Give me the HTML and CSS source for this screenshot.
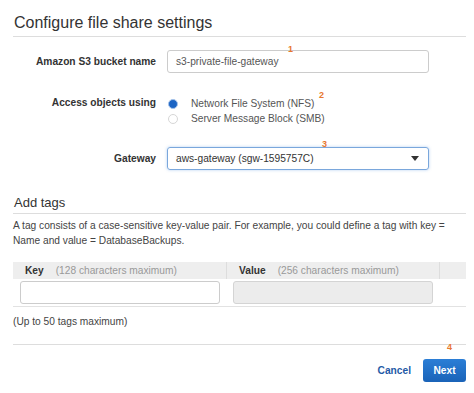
FILE: index.html
```html
<!DOCTYPE html>
<html lang="en">
<head>
    <meta charset="UTF-8">
    <title>Configure file share settings</title>
    <link rel="stylesheet" href="styles.css">
</head>
<body>

    <!-- File share settings -->
    <h1 class="page-title">Configure file share settings</h1>

    <div class="form-grid">
        <div class="form-label row-bucket">Amazon S3 bucket name</div>
        <div class="field">
            <div class="text-input">s3-private-file-gateway</div>
            <span class="marker marker-1">1</span>
        </div>

        <div class="form-label row-access">Access objects using</div>
        <div class="field radio-group">
            <div class="radio-item"><span class="radio checked"></span>Network File System (NFS)</div>
            <div class="radio-item"><span class="radio"></span>Server Message Block (SMB)</div>
            <span class="marker marker-2">2</span>
        </div>

        <div class="form-label row-gateway">Gateway</div>
        <div class="field field-gateway">
            <div class="select-input">
                <span>aws-gateway (sgw-1595757C)</span>
                <span class="caret"></span>
            </div>
            <span class="marker marker-3">3</span>
        </div>
    </div>

    <!-- Tags -->
    <h2 class="section-title">Add tags</h2>
    <p class="section-text">A tag consists of a case-sensitive key-value pair. For example, you could define a tag with key = Name and value = DatabaseBackups.</p>

    <div class="tag-table">
        <div class="tag-head">
            <div class="tag-col"><b>Key</b><span class="hint">(128 characters maximum)</span></div>
            <div class="tag-col"><b>Value</b><span class="hint">(256 characters maximum)</span></div>
            <div class="tag-col tag-spare"></div>
        </div>
        <div class="tag-row">
            <div class="tag-cell"><div class="tag-input"></div></div>
            <div class="tag-cell"><div class="tag-input disabled"></div></div>
        </div>
    </div>

    <p class="tag-limit">(Up to 50 tags maximum)</p>

    <!-- Actions -->
    <div class="actions">
        <a class="btn-cancel">Cancel</a>
        <a class="btn-next">Next</a>
        <span class="marker marker-4">4</span>
    </div>

</body>
</html>
```

FILE: styles.css
```css
/* General Reset */
* {
    margin: 0;
    padding: 0;
    box-sizing: border-box;
}

body {
    background: #fff;
    color: #444;
    font-family: 'Liberation Sans', Arial, sans-serif;
    font-size: 10.2px;
    padding: 0 8px 0 13px;
}

/* Page title */
.page-title {
    font-weight: normal;
    font-size: 16px;
    line-height: 24px;
    color: #333;
    padding: 11px 0 1px 1px;
    border-bottom: 1px solid #ddd;
}

/* Form */
.form-grid {
    display: grid;
    grid-template-columns: 143px 262px;
    column-gap: 11px;
    margin-top: 13px;
}

.form-label {
    font-weight: bold;
    color: #333;
    text-align: right;
    line-height: 23px;
}

.row-access {
    margin-top: 23px;
    line-height: 14px;
}

.row-gateway {
    margin-top: 21px;
}

.field {
    position: relative;
}

.text-input,
.select-input {
    height: 23px;
    border: 1px solid #ccc;
    border-radius: 3px;
    padding: 0 8px;
    line-height: 21px;
    color: #555;
}

.select-input {
    display: flex;
    justify-content: space-between;
    align-items: center;
    border-color: #7aa7dc;
    box-shadow: 0 0 3px rgba(102, 160, 230, 0.5);
    color: #333;
}

.caret {
    width: 0;
    height: 0;
    border-left: 4px solid transparent;
    border-right: 4px solid transparent;
    border-top: 5px solid #333;
    margin-right: 1px;
}

.radio-group {
    margin-top: 23px;
}

.radio-item {
    display: flex;
    align-items: center;
    line-height: 15px;
    color: #555;
}

.radio {
    width: 10px;
    height: 10px;
    border-radius: 50%;
    border: 1px solid #d6d6d6;
    margin: 0 13px 0 1px;
}

.radio.checked {
    background: #1b64c4;
    border: 1px solid #a6c3ea;
}

.field-gateway {
    margin-top: 21px;
}

/* Orange step markers */
.marker {
    position: absolute;
    color: #e8772e;
    font-size: 9px;
    font-weight: bold;
}

.marker-1 { left: 121px; top: -6px; }
.marker-2 { left: 152px; top: -6px; }
.marker-3 { left: 155px; top: -8px; }
.marker-4 { right: 14px; top: -17px; }

/* Tags */
.section-title {
    font-weight: normal;
    font-size: 13px;
    line-height: 20px;
    color: #333;
    margin-top: 23px;
    padding-left: 1px;
    border-bottom: 1px solid #ddd;
}

.section-text {
    line-height: 15px;
    margin-top: 4px;
    color: #444;
    padding-right: 4px;
}

.tag-table {
    margin-top: 14px;
    border-bottom: 1px solid #e2e2e2;
    padding-bottom: 2px;
}

.tag-head {
    display: grid;
    grid-template-columns: 214px 213px 1fr;
    background: #eee;
    height: 17px;
    line-height: 17px;
}

.tag-col {
    padding-left: 12px;
    border-right: 1px solid #ddd;
}

.tag-col b {
    color: #333;
    margin-right: 12px;
}

.tag-spare {
    border-right: none;
}

.hint {
    color: #999;
}

.tag-row {
    display: grid;
    grid-template-columns: 214px 213px;
    padding-top: 2px;
}

.tag-cell {
    padding-left: 7px;
}

.tag-input {
    width: 200px;
    height: 23px;
    border: 1px solid #ccc;
    border-radius: 3px;
    background: #fff;
}

.tag-cell + .tag-cell {
    padding-left: 6px;
}

.tag-input.disabled {
    background: #ececec;
    border-color: #d4d4d4;
}

.tag-limit {
    line-height: 15px;
    margin-top: 7px;
    padding-bottom: 15px;
    border-bottom: 1px solid #ddd;
    color: #444;
}

/* Actions */
.actions {
    position: relative;
    display: flex;
    justify-content: flex-end;
    align-items: center;
    gap: 12px;
    margin-top: 14px;
}

.btn-cancel {
    color: #1f5aa6;
    font-weight: bold;
}

.btn-next {
    background: linear-gradient(#2b7ed6, #1a63b8);
    color: #fff;
    font-weight: bold;
    border-radius: 3px;
    width: 43px;
    height: 23px;
    line-height: 23px;
    text-align: center;
}
```
